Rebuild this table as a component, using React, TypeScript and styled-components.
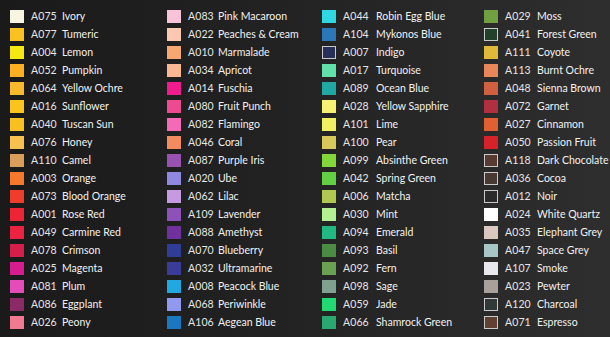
import styled, { createGlobalStyle } from 'styled-components';

const GlobalStyle = createGlobalStyle`
  html, body {
    margin: 0;
    padding: 0;
  }
  body {
    width: 610px;
    height: 337px;
    overflow: hidden;
    background: linear-gradient(90deg, #1a1a1a 0%, #222222 45%, #2e2e2e 100%);
    font-family: 'Lato', 'Liberation Sans', sans-serif;
  }
`;

const Chart = styled.div`
  display: grid;
  grid-template-columns: 157px 155px 162px 1fr;
  padding: 7px 0 0 10px;
`;

const Column = styled.div`
  display: flex;
  flex-direction: column;
`;

const Row = styled.div`
  display: flex;
  align-items: center;
  height: 18px;
`;

const Swatch = styled.div<{ color: string; outlined?: boolean }>`
  width: 14px;
  height: 13px;
  box-sizing: border-box;
  flex-shrink: 0;
  margin-right: 7px;
  background: ${p => p.color};
  border: ${p => (p.outlined ? '1.5px solid #c9c9c9' : 'none')};
`;

const Code = styled.span<{ w: number }>`
  width: ${p => p.w}px;
  flex-shrink: 0;
  font-size: 10.5px;
  color: #e6e6e6;
  letter-spacing: 0.1px;
`;

const Name = styled.span`
  font-size: 10.5px;
  color: #f2f2f2;
  white-space: nowrap;
`;

type Pen = [string, string, string, boolean?];

const columns: { codeW: number; pens: Pen[] }[] = [
  {
    codeW: 31,
    pens: [
      ['A075', 'Ivory', '#f8f4e2'],
      ['A077', 'Tumeric', '#f9c220'],
      ['A004', 'Lemon', '#f4ea12'],
      ['A052', 'Pumpkin', '#fbb022'],
      ['A064', 'Yellow Ochre', '#f9b92c'],
      ['A016', 'Sunflower', '#fbc41c'],
      ['A040', 'Tuscan Sun', '#f7c020'],
      ['A076', 'Honey', '#f8c04c'],
      ['A110', 'Camel', '#d89e5a'],
      ['A003', 'Orange', '#f6782c'],
      ['A073', 'Blood Orange', '#ef3c2c'],
      ['A001', 'Rose Red', '#ed2434'],
      ['A049', 'Carmine Red', '#eb2242'],
      ['A078', 'Crimson', '#d61e4a'],
      ['A025', 'Magenta', '#d61c8e'],
      ['A081', 'Plum', '#e64cb8'],
      ['A086', 'Eggplant', '#8c2a68'],
      ['A026', 'Peony', '#f27a90'],
    ],
  },
  {
    codeW: 30,
    pens: [
      ['A083', 'Pink Macaroon', '#f8c2d8'],
      ['A022', 'Peaches & Cream', '#fcc8b2'],
      ['A010', 'Marmalade', '#f7a872'],
      ['A034', 'Apricot', '#fab892'],
      ['A014', 'Fuschia', '#ee1c8c'],
      ['A080', 'Fruit Punch', '#ee4a90'],
      ['A082', 'Flamingo', '#f46ab6'],
      ['A046', 'Coral', '#f38a60'],
      ['A087', 'Purple Iris', '#9a52b2'],
      ['A020', 'Ube', '#9088de'],
      ['A062', 'Lilac', '#c69ae0'],
      ['A109', 'Lavender', '#8c52ba'],
      ['A088', 'Amethyst', '#70319e'],
      ['A070', 'Blueberry', '#2f3c98'],
      ['A032', 'Ultramarine', '#3b3c98'],
      ['A008', 'Peacock Blue', '#22a8e0'],
      ['A068', 'Periwinkle', '#9098ef'],
      ['A106', 'Aegean Blue', '#1a78c0'],
    ],
  },
  {
    codeW: 33,
    pens: [
      ['A044', 'Robin Egg Blue', '#2ed8e0'],
      ['A104', 'Mykonos Blue', '#2a78b8'],
      ['A007', 'Indigo', '#28305a', true],
      ['A017', 'Turquoise', '#62e0aa'],
      ['A089', 'Ocean Blue', '#22a8a2'],
      ['A028', 'Yellow Sapphire', '#f8f072'],
      ['A101', 'Lime', '#f0f062'],
      ['A100', 'Pear', '#d6c85a'],
      ['A099', 'Absinthe Green', '#82d83a'],
      ['A042', 'Spring Green', '#62d042'],
      ['A006', 'Matcha', '#b0c852'],
      ['A030', 'Mint', '#b2f092'],
      ['A094', 'Emerald', '#22b882'],
      ['A093', 'Basil', '#4a8c42'],
      ['A092', 'Fern', '#6aa052'],
      ['A098', 'Sage', '#80a090'],
      ['A059', 'Jade', '#22d872'],
      ['A066', 'Shamrock Green', '#2aa872'],
    ],
  },
  {
    codeW: 32,
    pens: [
      ['A029', 'Moss', '#70a042'],
      ['A041', 'Forest Green', '#22402a', true],
      ['A111', 'Coyote', '#e0b83a'],
      ['A113', 'Burnt Ochre', '#e8885a'],
      ['A048', 'Sienna Brown', '#d06042'],
      ['A072', 'Garnet', '#b03042'],
      ['A027', 'Cinnamon', '#e06032'],
      ['A050', 'Passion Fruit', '#d8222a'],
      ['A118', 'Dark Chocolate', '#583a32', true],
      ['A036', 'Cocoa', '#483a32', true],
      ['A012', 'Noir', '#2a2a2a', true],
      ['A024', 'White Quartz', '#ffffff'],
      ['A035', 'Elephant Grey', '#d8c8c0'],
      ['A047', 'Space Grey', '#a8c6c6'],
      ['A107', 'Smoke', '#e8e8ee'],
      ['A023', 'Pewter', '#a8a09a'],
      ['A120', 'Charcoal', '#303838', true],
      ['A071', 'Espresso', '#604032', true],
    ],
  },
];

export default function App() {
  return (
    <>
      <GlobalStyle />
      <Chart>
        {columns.map((col, i) => (
          <Column key={i}>
            {col.pens.map(([code, name, color, outlined]) => (
              <Row key={code}>
                <Swatch color={color} outlined={outlined} />
                <Code w={col.codeW}>{code}</Code>
                <Name>{name}</Name>
              </Row>
            ))}
          </Column>
        ))}
      </Chart>
    </>
  );
}
